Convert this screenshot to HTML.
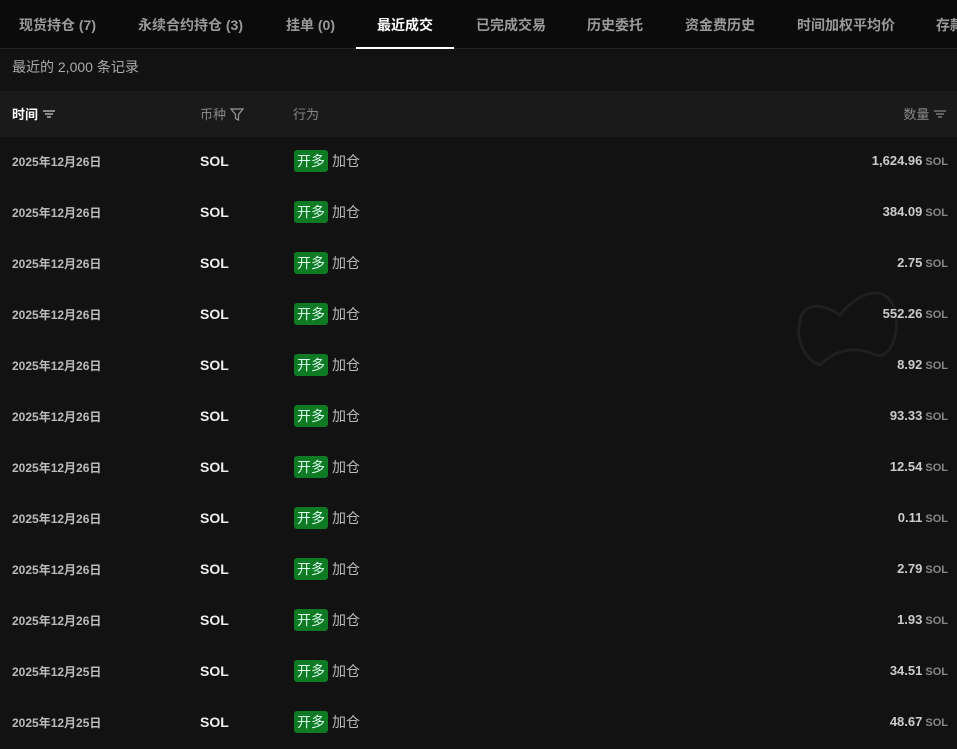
<!DOCTYPE html>
<html><head><meta charset="utf-8"><style>
*{margin:0;padding:0;box-sizing:border-box}
body{width:957px;height:736px;overflow:hidden;background:#121212;font-family:"Liberation Sans","Noto Sans CJK SC",sans-serif;color:#ddd}
.tabs{height:49px;background:#0b0b0b;border-bottom:1px solid #222;position:relative;white-space:nowrap}
.tab{position:absolute;top:15px;font-size:14px;font-weight:bold;color:#9a9a9a}
.tab.on{color:#fff}
.ul{position:absolute;left:356px;top:47px;width:98px;height:2px;background:#fff}
.sub{height:42px;padding:8px 12px;font-size:14px;color:#aaa}
.th{height:46px;background:#1a1a1a;position:relative;font-size:13px;color:#888}
.th span{position:absolute;top:13px}
.row{height:51px;position:relative;font-size:13px}
.row span{position:absolute}
.d{left:12px;top:16px;font-size:12px;font-weight:bold;color:#bbb}
.s{left:200px;top:16px;font-weight:bold;color:#eee;font-size:14px}
.b{left:294px;top:13px;background:#0e7a23;color:#dfe;border-radius:3px;padding:1px 3px;font-size:14px}
.a{left:332px;top:14px;color:#bbb;font-size:14px}
.q{right:9px;top:16px;font-weight:bold;color:#ccc;font-size:13px}
.q i{font-style:normal;color:#888;font-size:11px;margin-left:3px}
</style></head><body>
<div class="tabs">
<span class="tab" style="left:19px">现货持仓 (7)</span>
<span class="tab" style="left:138px">永续合约持仓 (3)</span>
<span class="tab" style="left:286px">挂单 (0)</span>
<span class="tab on" style="left:377px">最近成交</span>
<span class="tab" style="left:476px">已完成交易</span>
<span class="tab" style="left:587px">历史委托</span>
<span class="tab" style="left:685px">资金费历史</span>
<span class="tab" style="left:797px">时间加权平均价</span>
<span class="tab" style="left:936px">存款</span>
<div class="ul"></div>
</div>
<div class="sub">最近的 2,000 条记录</div>
<div class="th">
<span style="left:12px;color:#fff;font-weight:bold">时间 <svg width="14" height="10" viewBox="0 0 14 10"><path d="M1 2h12M3 5h8M5 8h4" stroke="#ccc" stroke-width="1.3"/></svg></span>
<span style="left:200px">币种 <svg width="14" height="13" viewBox="0 0 14 13" style="vertical-align:-2px"><path d="M1 1h12L8.5 6.5V12L5.5 10.5V6.5Z" fill="none" stroke="#999" stroke-width="1.2"/></svg></span>
<span style="left:293px">行为</span>
<span style="right:10px">数量 <svg width="14" height="10" viewBox="0 0 14 10"><path d="M1 2h12M3 5h8M5 8h4" stroke="#888" stroke-width="1.3"/></svg></span>
</div>
<svg style="position:absolute;left:795px;top:280px" width="162" height="90" viewBox="0 0 162 90"><path d="M5 40C10 20 30 25 45 35C60 15 90 0 100 30C105 55 95 80 80 75C60 65 40 70 25 85C10 80 0 60 5 40Z" fill="none" stroke="#1f1f1f" stroke-width="3"/></svg>
<div id="rows" style="position:relative">
<div class="row"><span class="d">2025年12月26日</span><span class="s">SOL</span><span class="b">开多</span><span class="a">加仓</span><span class="q">1,624.96<i>SOL</i></span></div>
<div class="row"><span class="d">2025年12月26日</span><span class="s">SOL</span><span class="b">开多</span><span class="a">加仓</span><span class="q">384.09<i>SOL</i></span></div>
<div class="row"><span class="d">2025年12月26日</span><span class="s">SOL</span><span class="b">开多</span><span class="a">加仓</span><span class="q">2.75<i>SOL</i></span></div>
<div class="row"><span class="d">2025年12月26日</span><span class="s">SOL</span><span class="b">开多</span><span class="a">加仓</span><span class="q">552.26<i>SOL</i></span></div>
<div class="row"><span class="d">2025年12月26日</span><span class="s">SOL</span><span class="b">开多</span><span class="a">加仓</span><span class="q">8.92<i>SOL</i></span></div>
<div class="row"><span class="d">2025年12月26日</span><span class="s">SOL</span><span class="b">开多</span><span class="a">加仓</span><span class="q">93.33<i>SOL</i></span></div>
<div class="row"><span class="d">2025年12月26日</span><span class="s">SOL</span><span class="b">开多</span><span class="a">加仓</span><span class="q">12.54<i>SOL</i></span></div>
<div class="row"><span class="d">2025年12月26日</span><span class="s">SOL</span><span class="b">开多</span><span class="a">加仓</span><span class="q">0.11<i>SOL</i></span></div>
<div class="row"><span class="d">2025年12月26日</span><span class="s">SOL</span><span class="b">开多</span><span class="a">加仓</span><span class="q">2.79<i>SOL</i></span></div>
<div class="row"><span class="d">2025年12月26日</span><span class="s">SOL</span><span class="b">开多</span><span class="a">加仓</span><span class="q">1.93<i>SOL</i></span></div>
<div class="row"><span class="d">2025年12月25日</span><span class="s">SOL</span><span class="b">开多</span><span class="a">加仓</span><span class="q">34.51<i>SOL</i></span></div>
<div class="row"><span class="d">2025年12月25日</span><span class="s">SOL</span><span class="b">开多</span><span class="a">加仓</span><span class="q">48.67<i>SOL</i></span></div>
</div>
</body></html>
